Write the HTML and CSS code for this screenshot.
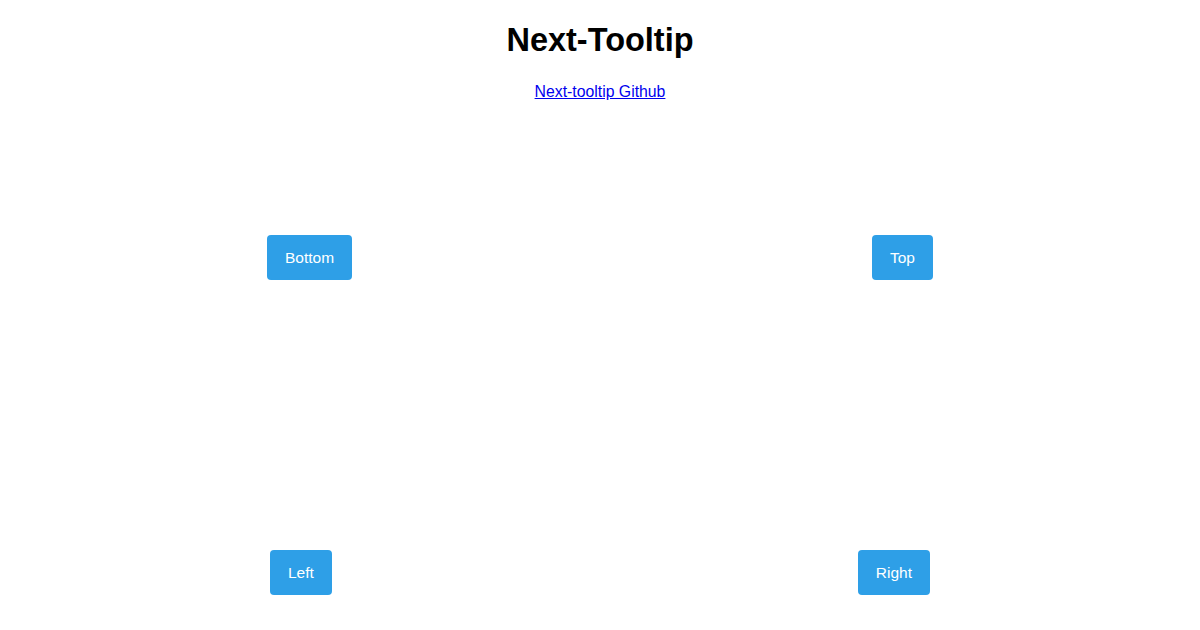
FILE: index.html
```html
<!DOCTYPE html>
<html lang="en">
<head>
    <meta charset="UTF-8">
    <meta name="viewport" content="width=device-width, initial-scale=1.0">
    <title>Next-Tooltip</title>
    <link rel="stylesheet" href="styles.css">
</head>
<body>
    <div class="page">
        <h1 class="title">Next-Tooltip</h1>
        <p class="repo">
            <a href="#">Next-tooltip Github</a>
        </p>

        <div class="stage">
            <div class="row row-top">
                <button class="tip-button" data-tip="bottom">Bottom</button>
                <button class="tip-button" data-tip="top">Top</button>
            </div>
            <div class="row row-bottom">
                <button class="tip-button" data-tip="left">Left</button>
                <button class="tip-button" data-tip="right">Right</button>
            </div>
        </div>
    </div>
</body>
</html>
```

FILE: styles.css
```css
body {
    margin: 0;
    font-family: "Liberation Sans", Arial, sans-serif;
    background: #fff;
    color: #000;
}
.page {
    text-align: center;
}
.title {
    font-size: 32.5px;
    margin: 22px 0 0;
    line-height: 37px;
}
.repo {
    margin: 24px 0 0;
    font-size: 15.8px;
    line-height: 18px;
}
.repo a {
    color: #0000ee;
}
.stage {
    width: 666px;
    margin: 134px auto 0;
    display: flex;
    flex-direction: column;
    gap: 270px;
}
.row {
    display: flex;
    justify-content: space-between;
}
.row-bottom {
    padding: 0 3px;
}
.tip-button {
    font-family: "Liberation Sans", Arial, sans-serif;
    font-size: 15.5px;
    line-height: 17px;
    padding: 14px 18px;
    background: #2e9fe7;
    color: #fff;
    border: none;
    border-radius: 4px;
    cursor: pointer;
}
```
